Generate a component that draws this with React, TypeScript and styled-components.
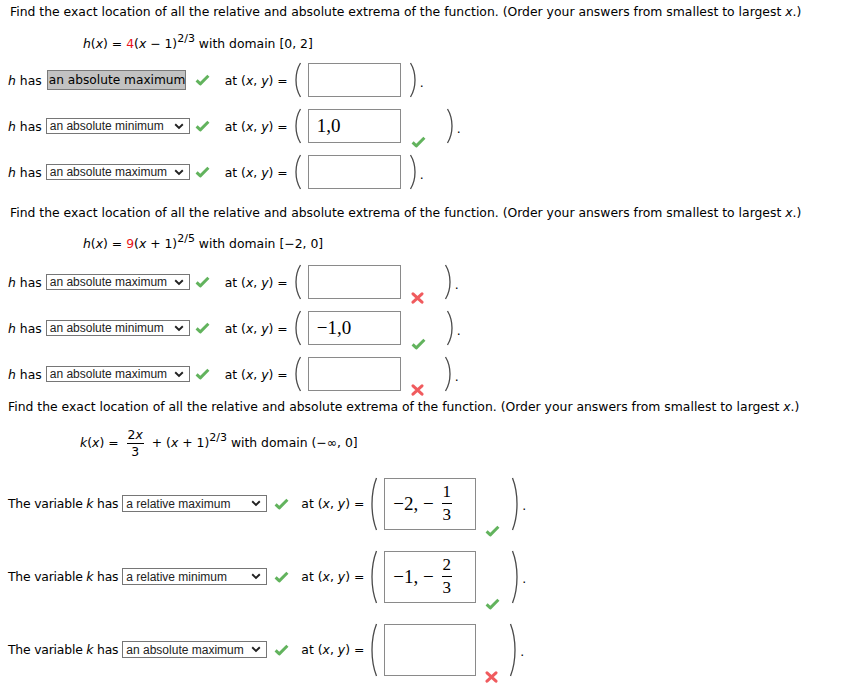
import styled, { createGlobalStyle } from "styled-components"

const GlobalStyle = createGlobalStyle`
  body {
    margin: 0;
    background: #fff;
    color: #000;
    font-family: "DejaVu Sans", Verdana, sans-serif;
    font-size: 12.4px;
  }
`

const Page = styled.div`
  display: flex;
  flex-direction: column;
  padding-left: 8px;
`

const Prompt = styled.p<{ $top: number; $indent?: number }>`
  margin: ${(p) => p.$top}px 0 0 ${(p) => p.$indent ?? 0}px;
  line-height: 18px;
  white-space: nowrap;
`

const Formula = styled.div<{ $top: number; $bottom: number; $indent: number; $height: number }>`
  height: ${(p) => p.$height}px;
  line-height: ${(p) => p.$height}px;
  margin: ${(p) => p.$top}px 0 ${(p) => p.$bottom}px ${(p) => p.$indent}px;
  white-space: pre;
`

const I = styled.i`
  font-style: italic;
`

const Red = styled.span`
  color: #e8141b;
`

const Sup = styled.span`
  font-size: 11px;
  vertical-align: 6px;
  line-height: 0;
`

const Fraction = styled.span<{ $size: number; $space: number }>`
  display: inline-flex;
  flex-direction: column;
  align-items: center;
  vertical-align: middle;
  font-size: ${(p) => p.$size}px;
  line-height: 1.15;
  margin: 0 ${(p) => p.$space}px;
`

const Numerator = styled.span`
  padding: 0 1px 1px;
  border-bottom: 1px solid #000;
`

const Denominator = styled.span`
  padding-top: 1px;
`

const Row = styled.div<{ $height: number }>`
  display: flex;
  align-items: center;
  height: ${(p) => p.$height}px;
  white-space: pre;
`

const Label = styled.span<{ $tight?: boolean }>`
  margin-right: 4px;
  letter-spacing: ${(p) => (p.$tight ? "-0.2px" : "normal")};
`

const Select = styled.div<{ $width: number; $height: number }>`
  box-sizing: border-box;
  width: ${(p) => p.$width}px;
  height: ${(p) => p.$height}px;
  border: 1px solid #767676;
  display: flex;
  align-items: center;
  justify-content: space-between;
  padding: 0 5px 0 3px;
  font-family: "Liberation Sans", Arial, sans-serif;
  font-size: 12px;
  color: #222;
`

const ActiveSelect = styled.div`
  box-sizing: border-box;
  width: 139px;
  height: 20px;
  margin-left: 1px;
  border: 1px solid #7a7a7a;
  background: #c2c2c2;
  display: flex;
  align-items: center;
  padding-left: 1px;
  font-size: 12.2px;
`

const Mark = styled.span<{ $left: number; $drop?: number }>`
  display: flex;
  margin-left: ${(p) => p.$left}px;
  align-self: ${(p) => (p.$drop !== undefined ? "flex-end" : "center")};
  margin-bottom: ${(p) => -(p.$drop ?? 0)}px;
`

const AtText = styled.span<{ $left: number }>`
  margin-left: ${(p) => p.$left}px;
`

const AnswerGroup = styled.div<{ $height: number }>`
  display: flex;
  align-items: center;
  height: ${(p) => p.$height}px;
  margin-left: 5px;
`

const Paren = styled.svg<{ $left: number }>`
  display: block;
  margin-left: ${(p) => p.$left}px;
  flex-shrink: 0;
`

const AnswerBox = styled.div<{ $width: number; $height: number }>`
  box-sizing: border-box;
  width: ${(p) => p.$width}px;
  height: ${(p) => p.$height}px;
  margin-left: 6px;
  border: 1px solid #8a8a8a;
  background: #fff;
  display: flex;
  align-items: center;
  padding-left: 8px;
  font-family: "Liberation Serif", "DejaVu Serif", serif;
  font-size: 19px;
  white-space: pre;
`

const Period = styled.span`
  margin-left: 2px;
  padding-top: 4px;
`

function Check() {
  return (
    <svg width="15" height="12" viewBox="0 0 15 12">
      <path
        d="M1.6 6.4 L5.3 9.9 L13.4 1.8"
        fill="none"
        stroke="#62b35d"
        strokeWidth="3"
        strokeLinejoin="round"
      />
    </svg>
  )
}

function Cross() {
  return (
    <svg width="13" height="12" viewBox="0 0 13 12">
      <path
        d="M2 1.8 L11 10.2 M11 1.8 L2 10.2"
        fill="none"
        stroke="#f05b5e"
        strokeWidth="3"
        strokeLinecap="round"
      />
    </svg>
  )
}

function Chevron() {
  return (
    <svg width="10" height="7" viewBox="0 0 10 7">
      <path d="M1.2 1.3 L5 5 L8.8 1.3" fill="none" stroke="#222" strokeWidth="1.9" />
    </svg>
  )
}

function BigParen({ height, close, left }: { height: number; close?: boolean; left: number }) {
  const d = close
    ? `M1.5 1 C7.5 ${height * 0.3} 7.5 ${height * 0.7} 1.5 ${height - 1}`
    : `M7.5 1 C1.5 ${height * 0.3} 1.5 ${height * 0.7} 7.5 ${height - 1}`
  return (
    <Paren $left={left} width="9" height={height} viewBox={`0 0 9 ${height}`}>
      <path d={d} fill="none" stroke="#4a4a4a" strokeWidth="1.3" />
    </Paren>
  )
}

type Answer = {
  value?: React.ReactNode
  mark?: "check" | "cross"
}

function AnswerSmall({ value, mark }: Answer) {
  return (
    <AnswerGroup $height={36}>
      <BigParen height={36} left={0} />
      <AnswerBox $width={93} $height={34}>
        {value}
      </AnswerBox>
      {mark && (
        <Mark $left={10} $drop={4}>
          {mark === "check" ? <Check /> : <Cross />}
        </Mark>
      )}
      <BigParen height={36} close left={mark ? 20 : 8} />
      <Period>.</Period>
    </AnswerGroup>
  )
}

function AnswerLarge({ value, mark }: Answer) {
  return (
    <AnswerGroup $height={54}>
      <BigParen height={54} left={0} />
      <AnswerBox $width={92} $height={52}>
        {value}
      </AnswerBox>
      {mark && (
        <Mark $left={9} $drop={6}>
          {mark === "check" ? <Check /> : <Cross />}
        </Mark>
      )}
      <BigParen height={54} close left={11} />
      <Period>.</Period>
    </AnswerGroup>
  )
}

function HRow({ choice, answer }: { choice: string; answer: Answer }) {
  return (
    <Row $height={46}>
      <Label>
        <I>h</I> has
      </Label>
      <Select $width={144} $height={16}>
        {choice}
        <Chevron />
      </Select>
      <Mark $left={5}>
        <Check />
      </Mark>
      <AtText $left={15}>
        at (<I>x</I>, <I>y</I>) =
      </AtText>
      <AnswerSmall {...answer} />
    </Row>
  )
}

function KRow({ choice, answer }: { choice: string; answer: Answer }) {
  return (
    <Row $height={73}>
      <Label $tight>
        The variable <I>k</I> has
      </Label>
      <Select $width={145} $height={17}>
        {choice}
        <Chevron />
      </Select>
      <Mark $left={7}>
        <Check />
      </Mark>
      <AtText $left={12}>
        at (<I>x</I>, <I>y</I>) =
      </AtText>
      <AnswerLarge {...answer} />
    </Row>
  )
}

const FractionValue = ({ whole, num }: { whole: string; num: string }) => (
  <>
    {`\u2212${whole}, \u2212 `}
    <Fraction $size={17} $space={3}>
      <Numerator>{num}</Numerator>
      <Denominator>3</Denominator>
    </Fraction>
  </>
)

const headingText = (
  <>
    Find the exact location of all the relative and absolute extrema of the function. (Order your
    answers from smallest to largest <I>x</I>.)
  </>
)

export default function App() {
  return (
    <Page>
      <GlobalStyle />
      <Prompt $top={3} $indent={2}>
        {headingText}
      </Prompt>
      <Formula $top={14} $bottom={4} $indent={75} $height={18}>
        <I>h</I>(<I>x</I>) = <Red>4</Red>(<I>x</I> − 1)<Sup>2/3</Sup> with domain [0, 2]
      </Formula>
      <Row $height={46}>
        <Label>
          <I>h</I> has
        </Label>
        <ActiveSelect>an absolute maximum</ActiveSelect>
        <Mark $left={9}>
          <Check />
        </Mark>
        <AtText $left={15}>
          at (<I>x</I>, <I>y</I>) =
        </AtText>
        <AnswerSmall />
      </Row>
      <HRow choice="an absolute minimum" answer={{ value: "1,0", mark: "check" }} />
      <HRow choice="an absolute maximum" answer={{}} />

      <Prompt $top={9} $indent={2}>
        {headingText}
      </Prompt>
      <Formula $top={13} $bottom={6} $indent={75} $height={18}>
        <I>h</I>(<I>x</I>) = <Red>9</Red>(<I>x</I> + 1)<Sup>2/5</Sup> with domain [−2, 0]
      </Formula>
      <HRow choice="an absolute maximum" answer={{ mark: "cross" }} />
      <HRow choice="an absolute minimum" answer={{ value: "\u22121,0", mark: "check" }} />
      <HRow choice="an absolute maximum" answer={{ mark: "cross" }} />

      <Prompt $top={1}>{headingText}</Prompt>
      <Formula $top={9} $bottom={6} $indent={72} $height={36}>
        <I>k</I>(<I>x</I>) =
        <Fraction $size={12.4} $space={8}>
          <Numerator>
            2<I>x</I>
          </Numerator>
          <Denominator>3</Denominator>
        </Fraction>
        + (<I>x</I> + 1)<Sup>2/3</Sup> with domain (−∞, 0]
      </Formula>
      <KRow
        choice="a relative maximum"
        answer={{ value: <FractionValue whole="2" num="1" />, mark: "check" }}
      />
      <KRow
        choice="a relative minimum"
        answer={{ value: <FractionValue whole="1" num="2" />, mark: "check" }}
      />
      <KRow choice="an absolute maximum" answer={{ mark: "cross" }} />
    </Page>
  )
}
